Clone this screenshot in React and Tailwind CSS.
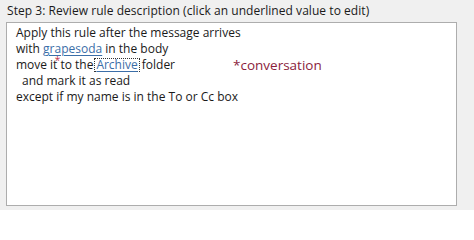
export default function App() {
  return (
    <div className="w-[474px] h-[210px] bg-[#f0f0f0] text-[#1a1a1a] overflow-hidden font-['Open_Sans',sans-serif]">
      <div className="pl-[7px] pt-[2px] h-[22px] text-[12px] leading-[17px] tracking-[0.05px]">
        Step 3: Review rule description (click an underlined value to edit)
      </div>
      <div className="ml-[6px] w-[451px] h-[184px] bg-white border border-[#adadad] pl-[9px] pt-[2px] text-[12px] leading-[16px]">
        <div>Apply this rule after the message arrives</div>
        <div>
          with <span className="text-[#3b6ea8] underline underline-offset-2">grapesoda</span> in the body
        </div>
        <div className="flex items-center">
          <span>move</span>
          <span className="relative ml-[3px]">
            it
            <span className="absolute right-[-3px] top-[-2px] text-[#c0304a] text-[10px] leading-[10px]">*</span>
          </span>
          <span className="ml-[3px]">to the</span>
          <span className="ml-[1px] px-[1px] border border-dotted border-[#333] text-[#3b6ea8] underline underline-offset-2 leading-[12px]">Archive</span>
          <span className="ml-[2px]">folder</span>
          <span className="ml-[58px] text-[#8a1d3c] text-[13.5px] leading-[16px]">*conversation</span>
        </div>
        <div className="pl-[6px]">and mark it as read</div>
        <div>except if my name is in the To or Cc box</div>
      </div>
    </div>
  );
}
